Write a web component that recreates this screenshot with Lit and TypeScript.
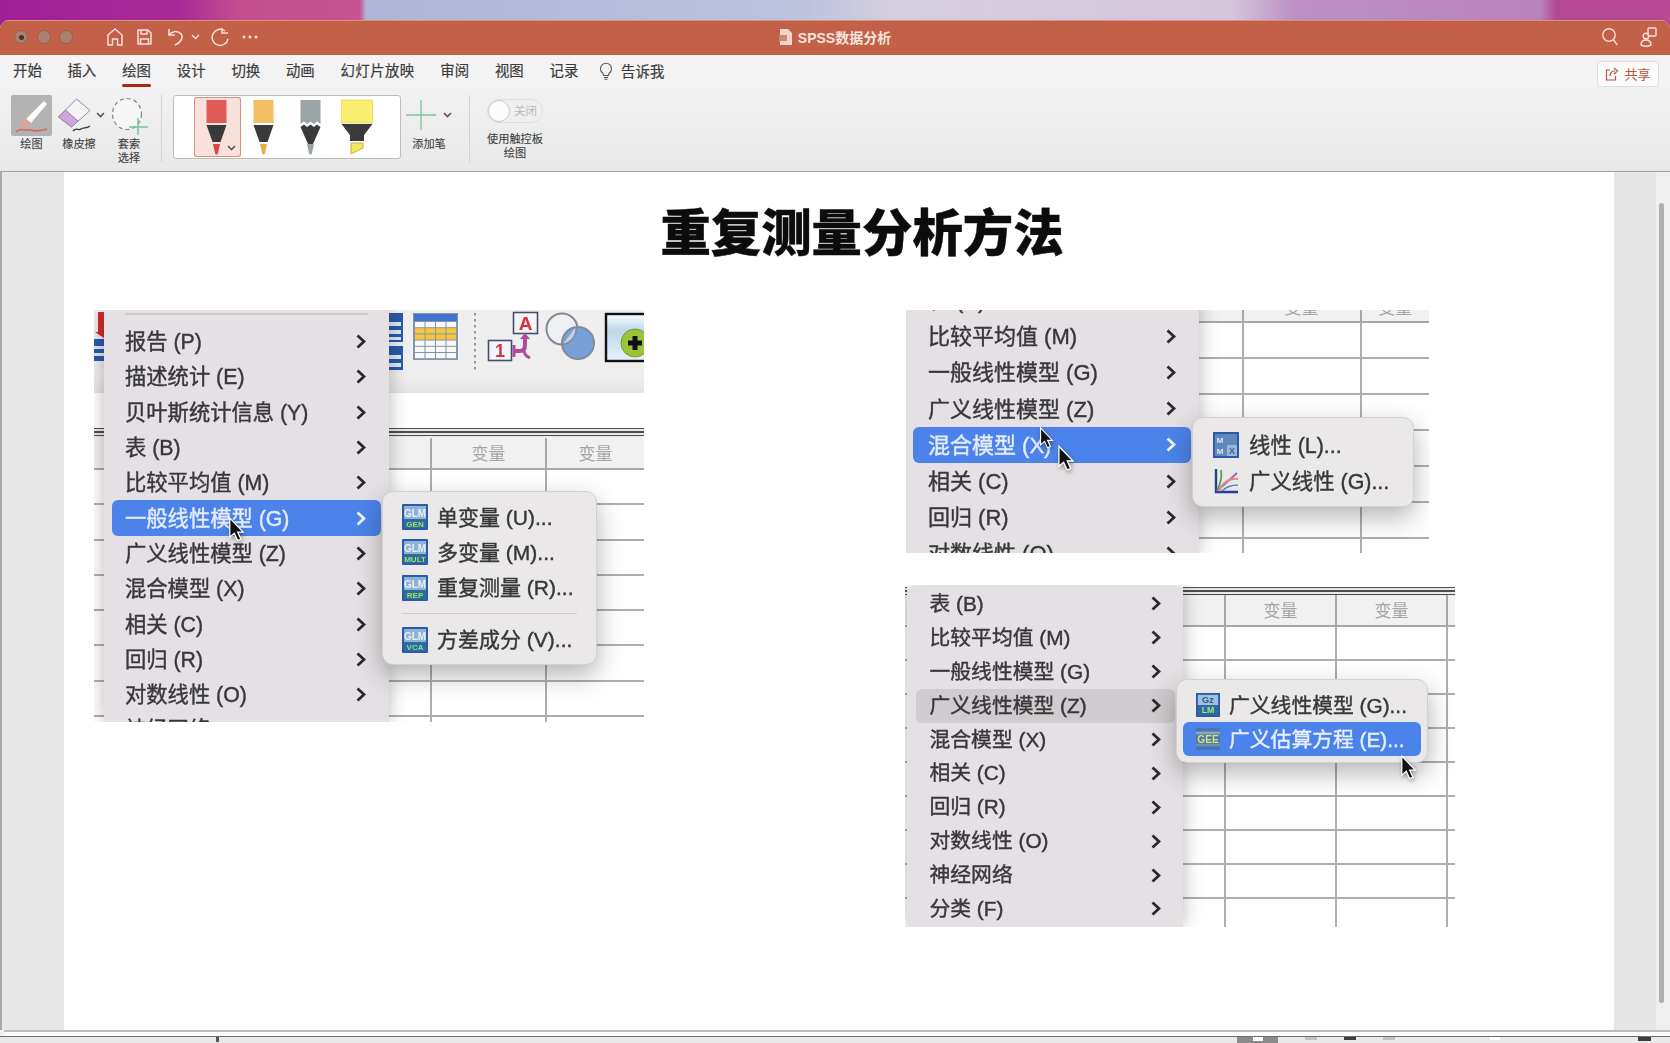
import { LitElement, css, html, svg } from 'lit';
import { customElement } from 'lit/decorators.js';

const chevron = html`<svg class="chev" width="10" height="15" viewBox="0 0 10 15"><path d="M1.5 1.5 8 7.5 1.5 13.5" fill="none" stroke="currentColor" stroke-width="2.8"/></svg>`;
const smallChev = html`<svg class="small-chev" width="9" height="6" viewBox="0 0 9 6"><path d="M1 1 4.5 4.5 8 1" fill="none" stroke="#555" stroke-width="1.6"/></svg>`;

function glm(sub: string, subColor = '#9be36a') {
  return html`<svg width="100%" viewBox="0 0 26 26" class="tile">
    <rect width="26" height="26" rx="1" fill="#2c5aa8"/>
    <rect x="2" y="2" width="22" height="13" fill="#8fb3d6"/>
    <rect x="2" y="15" width="22" height="9" fill="#2f6c9c"/>
    <text x="13" y="12.5" text-anchor="middle" font-size="10" font-weight="700" fill="#e6f0f8" font-family="Liberation Sans">GLM</text>
    <text x="13" y="22.5" text-anchor="middle" font-size="8" font-weight="700" fill="${subColor}" font-family="Liberation Sans">${sub}</text>
  </svg>`;
}

const mixIcon = html`<svg width="100%" viewBox="0 0 26 26" class="tile">
  <rect width="26" height="26" fill="#2c5aa8"/>
  <rect x="2" y="2" width="22" height="22" fill="#5f88bc"/>
  <rect x="14" y="13" width="10" height="11" fill="#9db8d4"/>
  <text x="7" y="11" text-anchor="middle" font-size="8" font-weight="700" fill="#dbe8f5" font-family="Liberation Sans">M</text>
  <text x="7" y="22" text-anchor="middle" font-size="8" font-weight="700" fill="#dbe8f5" font-family="Liberation Sans">M</text>
  <text x="19" y="22" text-anchor="middle" font-size="9" font-weight="700" fill="#3d5f94" font-family="Liberation Sans">X</text>
</svg>`;

const curveIcon = html`<svg width="100%" viewBox="0 0 26 26" class="tile">
  <path d="M3 1V24H25" fill="none" stroke="#26408e" stroke-width="2.4"/>
  <path d="M4 23C8 15 9 8 8 2" fill="none" stroke="#4fa35a" stroke-width="1.8"/>
  <path d="M4 23 24 5" fill="none" stroke="#8d6ab8" stroke-width="1.8"/>
  <path d="M6 23C10 14 16 10 25 11" fill="none" stroke="#e08a8a" stroke-width="2"/>
  <path d="M9 23C13 19 18 17 25 17" fill="none" stroke="#4d86c8" stroke-width="1.6"/>
</svg>`;

const gzlmIcon = html`<svg width="100%" viewBox="0 0 26 26" class="tile">
  <rect width="26" height="26" fill="#2c5aa8"/>
  <rect x="2" y="2" width="22" height="11" fill="#9cc0de"/>
  <rect x="2" y="13" width="22" height="11" fill="#2f6c9c"/>
  <text x="13" y="11" text-anchor="middle" font-size="10" font-weight="700" fill="#34588f" font-family="Liberation Sans">Gz</text>
  <text x="13" y="22" text-anchor="middle" font-size="9.5" font-weight="700" fill="#a6e07a" font-family="Liberation Sans">LM</text>
</svg>`;

const geeIcon = html`<svg width="100%" viewBox="0 0 26 26" class="tile">
  <rect y="1" width="26" height="24" fill="#4a75b4"/>
  <rect y="5" width="26" height="3" fill="#8fa6b8"/>
  <rect y="18" width="26" height="3" fill="#6f8fa8"/>
  <text x="13" y="17" text-anchor="middle" font-size="11" font-weight="700" fill="#d6e36c" font-family="Liberation Sans">GEE</text>
</svg>`;

// right part of the first screenshot's spss toolbar, starts at the menu edge
const spssTools = html`<svg class="spss-tools" width="255" height="60" viewBox="0 0 255 60">
  ${[0, 33].map((y) => svg`<g transform="translate(0 ${y + 3})">
    <rect width="14" height="29" fill="#2a5aa8"/>
    <rect y="9" width="12" height="4" fill="#dfe8f4"/><rect y="17" width="12" height="4" fill="#dfe8f4"/><rect y="24" width="12" height="3" fill="#dfe8f4"/>
  </g>`)}
  <g transform="translate(24 3)">
    <rect width="45" height="47" fill="#8494ad"/>
    <rect x="1" y="1" width="43" height="7" fill="#3f74c8"/>
    ${[0, 1, 2, 3, 4, 5].map((r) => [0, 1, 2, 3].map((c) => svg`<rect x=${2 + c * 10.5} y=${9 + r * 6.2} width="9.5" height="5.2" fill=${r === 1 || r === 2 ? '#f3c63c' : '#f8f8f8'}/>`))}
  </g>
  <path d="M86 3V60" stroke="#9a9a9a" stroke-width="2" stroke-dasharray="2.5 3.5"/>
  <rect x="124.5" y="2.5" width="24" height="21" fill="#f4f4f8" stroke="#42506a" stroke-width="1.6"/>
  <text x="136.5" y="20" text-anchor="middle" font-size="19" font-weight="700" fill="#d9323f" font-family="Liberation Sans">A</text>
  <rect x="99.5" y="30.5" width="23" height="20" fill="#f4f4f8" stroke="#42506a" stroke-width="1.6"/>
  <text x="111" y="47" text-anchor="middle" font-size="18" font-weight="700" fill="#d9323f" font-family="Liberation Sans">1</text>
  <path d="M125 41H131C135 41 136 38 136 35V29" fill="none" stroke="#b04a9c" stroke-width="4"/>
  <path d="M131 29 136 23 141 29Z" fill="#b04a9c"/>
  <path d="M125 35V47M135 41C136 45 137 46 141 48" fill="none" stroke="#b04a9c" stroke-width="3"/>
  <circle cx="173" cy="19" r="15.5" fill="#eef0f6" stroke="#85898f" stroke-width="2"/>
  <circle cx="189" cy="33" r="16" fill="#7aa0da" stroke="#7f8b9e" stroke-width="2"/>
  <path d="M173.5 34.5A15.5 15.5 0 0 0 187 17" fill="#c2d2ea" stroke="#85898f" stroke-width="1.5"/>
  <rect x="217" y="4" width="40" height="47" fill="url(#plus-bg)" stroke="#111" stroke-width="2.4"/>
  <defs><linearGradient id="plus-bg" x1="0" y1="0" x2="0" y2="1"><stop offset="0" stop-color="#fff"/><stop offset=".35" stop-color="#bcd8ea"/><stop offset="1" stop-color="#e8f2f8"/></linearGradient></defs>
  <circle cx="246" cy="33" r="14" fill="#9cc43a" stroke="#7c9a2c"/>
  <path d="M246 26V40M239 33H253" stroke="#111" stroke-width="5"/>
</svg>`;

const spssLeft = html`<svg class="spss-left" width="10" height="60" viewBox="0 0 10 60">
  <path d="M4 2H10V28L1 22H4Z" fill="#d8282c"/>
  <rect y="29" width="10" height="22" fill="#2a5aa8"/>
  <rect y="36" width="10" height="3" fill="#dfe8f4"/><rect y="43" width="10" height="3" fill="#dfe8f4"/>
</svg>`;

interface Sub { icon?: unknown; label?: string; on?: boolean; sep?: boolean }
interface Shot {
  left: number; top: number; width: number; height: number;
  toolbar: boolean; gapRow: number; triple: boolean; headH: number;
  first: number; col: number; cols: number; pitch: number; gridRows: number;
  menuLeft: number; menuW: number; menuTop: number; rowH: number; font: number;
  rowML: number; rowMR: number; rowPL: number; rowPR: number; ruleTop?: boolean;
  items: string[]; active: string; activeCls: string;
  subLeft: number; subTop: number; subW: number; subH: number; subPad: number; subRow: number; subFont: number;
  iconW: number; iconPad: number; iconGap: number; sub: Sub[];
  cursors: { x: number; y: number; s: number }[];
}

const SHOTS: Shot[] = [
  {
    left: 30, top: 138, width: 550, height: 412,
    toolbar: true, gapRow: 35, triple: true, headH: 33,
    first: 338, col: 115, cols: 1, pitch: 35.3, gridRows: 8,
    menuLeft: 10, menuW: 285, menuTop: 0, rowH: 35.3, font: 21.3,
    rowML: 7.5, rowMR: 8, rowPL: 13.5, rowPR: 15, ruleTop: true,
    items: ['报告 (P)', '描述统计 (E)', '贝叶斯统计信息 (Y)', '表 (B)', '比较平均值 (M)', '一般线性模型 (G)', '广义线性模型 (Z)', '混合模型 (X)', '相关 (C)', '回归 (R)', '对数线性 (O)', '神经网络'],
    active: '一般线性模型 (G)', activeCls: 'on',
    subLeft: 288, subTop: 181, subW: 215, subH: 174, subPad: 8.4, subRow: 35.3, subFont: 21,
    iconW: 26, iconPad: 13, iconGap: 9,
    sub: [
      { icon: glm('GEN'), label: '单变量 (U)...' },
      { icon: glm('MULT'), label: '多变量 (M)...' },
      { icon: glm('REP'), label: '重复测量 (R)...' },
      { sep: true },
      { icon: glm('VCA', '#7fe0a0'), label: '方差成分 (V)...' },
    ],
    cursors: [{ x: 134, y: 207, s: 17 }],
  },
  {
    left: 841.5, top: 138, width: 523.5, height: 243,
    toolbar: false, gapRow: 0, triple: false, headH: 13,
    first: 338, col: 118, cols: 1, pitch: 36, gridRows: 7,
    menuLeft: 0, menuW: 293, menuTop: -28, rowH: 36.2, font: 22,
    rowML: 7.5, rowMR: 7.5, rowPL: 15, rowPR: 15,
    items: ['表 (B)', '比较平均值 (M)', '一般线性模型 (G)', '广义线性模型 (Z)', '混合模型 (X)', '相关 (C)', '回归 (R)', '对数线性 (O)'],
    active: '混合模型 (X)', activeCls: 'on',
    subLeft: 286, subTop: 107, subW: 222.5, subH: 90, subPad: 10, subRow: 36, subFont: 21.4,
    iconW: 26, iconPad: 14.5, iconGap: 10,
    sub: [
      { icon: mixIcon, label: '线性 (L)...' },
      { icon: curveIcon, label: '广义线性 (G)...' },
    ],
    cursors: [{ x: 133.5, y: 117, s: 15 }, { x: 151.5, y: 135, s: 18 }],
  },
  {
    left: 841, top: 413, width: 550, height: 342,
    toolbar: false, gapRow: 0, triple: true, headH: 31,
    first: 321, col: 111, cols: 2, pitch: 34, gridRows: 9,
    menuLeft: 2, menuW: 276, menuTop: 2, rowH: 33.9, font: 20.8,
    rowML: 9, rowMR: 8, rowPL: 13.5, rowPR: 14,
    items: ['表 (B)', '比较平均值 (M)', '一般线性模型 (G)', '广义线性模型 (Z)', '混合模型 (X)', '相关 (C)', '回归 (R)', '对数线性 (O)', '神经网络', '分类 (F)'],
    active: '广义线性模型 (Z)', activeCls: 'hover',
    subLeft: 271, subTop: 94, subW: 252, subH: 84, subPad: 9, subRow: 34, subFont: 20.8,
    iconW: 24, iconPad: 13, iconGap: 9,
    sub: [
      { icon: gzlmIcon, label: '广义线性模型 (G)...' },
      { icon: geeIcon, label: '广义估算方程 (E)...', on: true },
    ],
    cursors: [{ x: 495, y: 170, s: 17 }],
  },
];

const TABS = ['开始', '插入', '绘图', '设计', '切换', '动画', '幻灯片放映', '审阅', '视图', '记录'];

function pen(body: string, tip: string, kind: 'round' | 'jag' | 'wide') {
  if (kind === 'wide') {
    return html`<svg width="47" height="60" viewBox="1 0 47 60">
      <rect x="7.5" y="3" width="31" height="23" fill="${body}" stroke="#e4c94a" stroke-width=".6"/>
      <path d="M7.5 27H38.5L30 38V44H16V38Z" fill="#3a3a3c"/>
      <path d="M17 46H29V51L17 57Z" fill="${tip}" stroke="#c9b23a" stroke-width="1"/>
    </svg>`;
  }
  const top = kind === 'jag'
    ? svg`<path d="M13.5 3H33.5V27L30 24.5 27 27 23.5 24.5 20 27 17 24.5 13.5 27Z" fill="${body}"/>
          <path d="M13.5 30 17 27.5 20 30 23.5 27.5 27 30 30 27.5 33.5 30 26 47H21Z" fill="#3a3a3c"/>`
    : svg`<rect x="13.5" y="3" width="20" height="23" fill="${body}"/>
          <path d="M13.5 28H33.5L27.5 45H19.5Z" fill="#3a3a3c"/>`;
  return html`<svg width="47" height="60" viewBox="1 0 47 60">
    ${top}
    <path d="M20 47H27L25 56C24.5 58 22.5 58 22 56Z" fill="${tip}"/>
  </svg>`;
}

@customElement('spss-shot')
export class SpssShot extends LitElement {
  static properties = { data: { attribute: false } };
  data!: Shot;

  static styles = css`
    :host { display: block; position: relative; width: 100%; height: 100%; overflow: hidden; filter: blur(0.35px); font-family: "Liberation Sans", "Noto Sans CJK SC", sans-serif; }
    .sheet { display: flex; flex-direction: column; width: 100%; height: 100%; background: #fff; }
    .bar { display: flex; flex: none; height: 83px; background: linear-gradient(#efefef 0, #eeeeee 82%, #e4e4e4 100%); }
    .spss-left { flex: none; }
    .spss-tools { flex: none; margin-left: 285px; }
    .gap { flex: none; background: #fff; }
    .triple { flex: none; height: 9px; background: repeating-linear-gradient(#4e4e4e 0 1.5px, #e8e8e8 1.5px 3.5px); }
    .head { flex: none; display: grid; background: #f1f1f1; border-bottom: 2px solid #a8a8a8; box-sizing: border-box; align-items: end; }
    .head span { text-align: center; font-size: 17px; line-height: 34px; color: #a5a5a5; border-right: 2px solid #a8a8a8; height: 30px; margin-top: -18px; }
    .head span.end { border-right: none; }
    .grid { flex: 1; display: grid; min-height: 0; overflow: hidden; }
    .grid i { display: block; border-right: 2px solid #aeaeae; border-bottom: 2px solid #aeaeae; box-sizing: border-box; }
    .grid i.end { border-right: none; }
    .menu { position: absolute; bottom: 0; background: #e4e0e4; box-shadow: 0 0 18px rgba(0, 0, 0, 0.28); overflow: hidden; }
    .rule { position: absolute; top: 3px; left: 21px; right: 21px; height: 2px; background: #cbc8cc; }
    .spacer { height: 14px; }
    .row { display: flex; align-items: center; justify-content: space-between; box-sizing: border-box; color: #38373a; -webkit-text-stroke: 0.4px #38373a; border-radius: 6px; white-space: nowrap; }
    .row > span { padding-bottom: 4px; }
    .row .chev { color: #2a2a2c; flex: none; }
    .row.on { background: #4c83ea; color: #e4ecfb; -webkit-text-stroke-color: #e4ecfb; }
    .row.on .chev { color: #eef3fc; }
    .row.hover { background: #cfcbce; }
    .sub { position: absolute; box-sizing: border-box; background: #eae8e8; border: 1px solid #d2d0d0; border-radius: 11px; box-shadow: 0 10px 26px rgba(0, 0, 0, 0.3); }
    .sub-row { display: flex; align-items: center; box-sizing: border-box; margin: 0 6px; border-radius: 6px; color: #38373a; -webkit-text-stroke: 0.4px #38373a; white-space: nowrap; }
    .sub-row > span:last-child { padding-bottom: 3px; }
    .sub-row.on { background: #4c83ea; color: #e8effc; -webkit-text-stroke-color: #e8effc; }
    .sub-row .tile { display: block; }
    .icon { flex: none; }
    .sep { height: 17px; display: flex; align-items: flex-end; padding: 0 19px 8px; box-sizing: border-box; }
    .sep::before { content: ""; flex: 1; height: 1.5px; background: #cdcbcb; }
    .cursor { position: absolute; filter: drop-shadow(1px 2px 2px rgba(0, 0, 0, 0.35)); }
  `;

  render() {
    const d = this.data;
    const cols = `${d.first}px repeat(${d.cols}, ${d.col}px) 1fr`;
    const perRow = d.cols + 2;
    const cells = Array.from({ length: d.gridRows * perRow });
    return html`
      <div class="sheet">
        ${d.toolbar ? html`<div class="bar">${spssLeft}${spssTools}</div>` : ''}
        ${d.gapRow ? html`<div class="gap" style="height:${d.gapRow}px"></div>` : ''}
        ${d.triple ? html`<div class="triple" style="margin-top:${d.toolbar ? 0 : 2}px"></div>` : ''}
        <div class="head" style="height:${d.headH}px;grid-template-columns:${cols}">
          <span></span>
          ${Array.from({ length: d.cols + 1 }).map((_, i) => html`<span class=${i === d.cols ? 'end' : ''}>${i === d.cols && d.cols === 2 ? '' : '变量'}</span>`)}
        </div>
        <div class="grid" style="grid-template-columns:${cols};grid-auto-rows:${d.pitch}px">
          ${cells.map((_, i) => html`<i class=${i % perRow === perRow - 1 ? 'end' : ''}></i>`)}
        </div>
      </div>
      <div class="menu" style="left:${d.menuLeft}px;width:${d.menuW}px;top:${d.menuTop}px">
        ${d.ruleTop ? html`<div class="rule"></div><div class="spacer"></div>` : ''}
        ${d.items.map((t) => html`<div class="row ${t === d.active ? d.activeCls : ''}"
            style="height:${d.rowH}px;font-size:${d.font}px;margin:0 ${d.rowMR}px 0 ${d.rowML}px;padding:0 ${d.rowPR}px 0 ${d.rowPL}px">
            <span>${t}</span>${chevron}</div>`)}
      </div>
      <div class="sub" style="left:${d.subLeft}px;top:${d.subTop}px;width:${d.subW}px;height:${d.subH}px;padding-top:${d.subPad - 1}px">
        ${d.sub.map((s) => s.sep
          ? html`<div class="sep"></div>`
          : html`<div class="sub-row ${s.on ? 'on' : ''}" style="height:${d.subRow}px;font-size:${d.subFont}px;padding-left:${d.iconPad}px;gap:${d.iconGap}px">
              <span class="icon" style="width:${d.iconW}px">${s.icon}</span><span>${s.label}</span></div>`)}
      </div>
      ${d.cursors.map((c) => html`<svg class="cursor" style="left:${c.x}px;top:${c.y}px" width=${c.s} height=${c.s * 1.45} viewBox="0 0 15 22">
        <path d="M1.5 1V18L5.5 14.5 8.5 21 11.5 19.8 8.5 13.5H13.5Z" fill="#111" stroke="#fff" stroke-width="1.1"/></svg>`)}
    `;
  }
}

@customElement('app-root')
export class AppRoot extends LitElement {
  static styles = css`
    :host { display: block; width: 1670px; height: 1043px; overflow: hidden; }
    .desktop { display: flex; flex-direction: column; height: 100%; box-sizing: border-box; padding-top: 20px;
      background: linear-gradient(90deg, #a01f97 0, #a82a96 180px, #c2508f 240px, #c45590 360px, #aeb5d6 366px, #bcc2dc 800px, #d5cfdf 892px, #d6c6dc 1230px, #bc90c2 1294px, #b884bc 1540px, #b54a92 1556px);
      font-family: "Liberation Sans", "Noto Sans CJK SC", sans-serif; }
    .win { flex: 1; display: flex; flex-direction: column; min-height: 0; background: #f2f2f2; border-radius: 9px 9px 0 0; overflow: hidden; }

    .titlebar { flex: none; height: 35px; padding-bottom: 2px; background: #c26048; display: grid; grid-template-columns: 1fr auto 1fr; align-items: center; color: #f3dcd3; border-top: 1px solid #d8917d; box-sizing: border-box; }
    .tb-left { display: flex; align-items: center; padding-left: 14px; }
    .light { width: 14px; height: 14px; border-radius: 50%; background: #ab7f70; border: 1px solid #95604f; box-sizing: border-box; margin-right: 8.5px; display: flex; align-items: center; justify-content: center; }
    .light.dot::after { content: ""; width: 5px; height: 5px; border-radius: 50%; background: #4a3028; }
    .qa { display: flex; align-items: center; margin-left: 24px; gap: 11px; }
    .qa svg { display: block; }
    .qa .undo { margin-left: 3px; }
    .qa .down { margin-left: -5px; }
    .qa .more { margin-left: 0; }
    .doc { display: flex; align-items: center; gap: 6px; font-size: 14px; font-weight: 700; color: #f5e4dd; }
    .tb-right { display: flex; justify-content: flex-end; align-items: center; gap: 20px; padding-right: 13px; }

    .tabs { flex: none; height: 32px; display: flex; align-items: center; justify-content: space-between; background: #f3f3f3; padding: 0 11px 0 13px; box-sizing: border-box; }
    .tab-list { display: flex; align-items: center; height: 100%; gap: 25.8px; }
    .tab { position: relative; font-size: 14.4px; color: #3c3c3c; line-height: 33px; height: 100%; white-space: nowrap; -webkit-text-stroke: 0.2px #3c3c3c; }
    .tab.wide { letter-spacing: 0.4px; }
    .tab.on::after { content: ""; position: absolute; left: 0; right: 0; bottom: 0; height: 3px; border-radius: 2px; background: #a3271a; }
    .tell { display: flex; align-items: center; gap: 8px; font-size: 14.4px; color: #3c3c3c; margin-left: -5px; padding-bottom: 1px; -webkit-text-stroke: 0.2px #3c3c3c; }
    .share { display: flex; align-items: center; gap: 5px; width: 62px; height: 26px; margin-top: 5px; justify-content: center; background: #fbfbfb; border: 1px solid #dddddd; border-radius: 3px; box-sizing: border-box; color: #b5543f; font-size: 13px; }

    .ribbon { flex: none; height: 85px; display: flex; align-items: flex-start; padding: 8px 0 0 11px; box-sizing: border-box; background: linear-gradient(#f1f1f1, #e9e9e9); border-bottom: 1px solid #9e9e9e; }
    .tool { display: flex; flex-direction: column; align-items: center; flex: none; font-size: 11.2px; line-height: 14px; color: #3e3e3e; text-align: center; -webkit-text-stroke: 0.1px #3e3e3e; }
    .tool .ic { height: 40px; margin-bottom: 2px; display: flex; align-items: flex-start; }
    .tool .ic.row-ic { align-items: center; }
    .eraser { gap: 3px; margin-left: 3px; }
    .addpen { gap: 7px; }
    .lasso { margin-left: 3px; }
    .btn-on { width: 41px; height: 41px; background: #b3b3b3; border-radius: 2px; }
    .vr { flex: none; width: 1px; height: 67px; background: #d3d3d3; }
    .gallery { flex: none; width: 228px; height: 64px; margin-left: 11px; display: grid; grid-template-columns: repeat(4, 47px); padding: 1px 0 0 20px; box-sizing: border-box; background: #fff; border: 1px solid #bdbdbd; border-radius: 3px; }
    .pen { position: relative; height: 60px; box-sizing: border-box; }
    .pen svg { display: block; }
    .pen.sel { background: #f8e1db; box-shadow: inset 0 0 0 1px #da8e7c; border-radius: 3px; }
    .pen .small-chev { position: absolute; right: 5px; bottom: 6px; }
    .toggle { display: flex; align-items: center; width: 56px; height: 24px; border-radius: 12px; background: #efefef; border: 1px solid #dcdcdc; box-sizing: border-box; margin: 4px 0 9px; color: #b9b9b9; font-size: 11.5px; gap: 4px; -webkit-text-stroke: 0; }
    .knob { flex: none; width: 22px; height: 22px; border-radius: 50%; background: #fbfbfb; border: 1px solid #c9c9c9; box-sizing: border-box; }

    .main { flex: none; height: 858px; display: flex; }
    .side { flex: none; width: 64px; background: #e7e7e7; border-left: 2px solid #a8a8a8; box-sizing: border-box; }
    .slide { flex: 1; position: relative; background: #fff; }
    .title { margin: 0; padding: 28px 0 0 46px; text-align: center; font-size: 50.4px; line-height: 60px; font-weight: 900; color: #0c0c0c; -webkit-text-stroke: 0.4px #0c0c0c; font-family: "Noto Sans CJK SC", sans-serif; }
    .shot { position: absolute; }
    .rail { flex: none; width: 56px; background: #e5e5e5; display: flex; justify-content: flex-end; }
    .track { width: 14px; background: #efefef; padding: 31px 6px 0 3px; box-sizing: border-box; }
    .thumb { height: 800px; background: #afafaf; border-radius: 3px; }

    .foot { flex: none; height: 6px; background: #fcfcfc; border-top: 2px solid #bcbcbc; box-sizing: border-box; margin-left: 4px; }
    .status { flex: 1; display: flex; align-items: flex-start; background: #e9e9e9; border-top: 1.5px solid #6e6e6e; padding-left: 216px; overflow: hidden; }
    .tick { flex: none; width: 3px; height: 5px; background: #555; }
    .view { flex: none; width: 41px; height: 6px; background: #8a8a8a; margin-left: 1018px; display: flex; justify-content: center; }
    .view i { width: 10px; height: 4px; background: #fff; }
    .mini { flex: none; width: 12px; height: 3px; margin-left: 27px; background: #c2c2c2; }
    .mini.dark { background: #3e3e3e; }
    .knob-s { flex: none; width: 10px; height: 3px; margin-left: 95px; background: #fff; }
    .end { flex: none; width: 13px; height: 4px; margin-left: 138px; background: #3e3e3e; }
  `;

  render() {
    return html`
      <div class="desktop">
        <div class="win">
          <header class="titlebar">
            <div class="tb-left">
              <span class="light dot"></span><span class="light"></span><span class="light"></span>
              <div class="qa">
                <svg width="18" height="20" viewBox="0 0 18 20" fill="none" stroke="#f6dfd6" stroke-width="1.5"><path d="M2 18V8L9 2l7 6v10h-4.5v-6h-5v6Z" stroke-linejoin="round"/></svg>
                <svg width="18" height="18" viewBox="0 0 18 18" fill="none" stroke="#f6dfd6" stroke-width="1.5"><path d="M3 2h10l3 3v11H3Z" stroke-linejoin="round"/><path d="M6 2v4h6V2M5.5 16v-5h8v5"/></svg>
                <svg class="undo" width="18" height="20" viewBox="0 0 18 20" fill="none" stroke="#f6dfd6" stroke-width="1.6"><path d="M2 2v6h6"/><path d="M2 8c3-4 9-5 12-1 3 4-1 9-6 11"/></svg>
                <svg class="down" width="9" height="6" viewBox="0 0 9 6"><path d="M1 1 4.5 4.5 8 1" fill="none" stroke="#f6dfd6" stroke-width="1.5"/></svg>
                <svg width="20" height="20" viewBox="0 0 20 20" fill="none" stroke="#f6dfd6" stroke-width="1.5"><path d="M14 4A8 8 0 1 0 17 12"/><path d="M11 1v5h6" /></svg>
                <svg class="more" width="16" height="4" viewBox="0 0 16 4" fill="#f6dfd6"><circle cx="2" cy="2" r="1.5"/><circle cx="8" cy="2" r="1.5"/><circle cx="14" cy="2" r="1.5"/></svg>
              </div>
            </div>
            <div class="doc">
              <svg width="13" height="16" viewBox="0 0 13 16"><path d="M1 0h8l4 4v12H1Z" fill="#eed4ca"/><rect x="0" y="6" width="8" height="6" fill="#c88a78"/></svg>
              <span>SPSS数据分析</span>
            </div>
            <div class="tb-right">
              <svg width="18" height="20" viewBox="0 0 18 20" fill="none" stroke="#f6dfd6" stroke-width="1.4"><circle cx="8" cy="8" r="6.2"/><path d="m12.5 13 4 5"/></svg>
              <svg width="18" height="20" viewBox="0 0 18 20" fill="none" stroke="#f6dfd6" stroke-width="1.4"><rect x="9" y="1" width="8" height="8" rx="1"/><circle cx="7" cy="9" r="2.8"/><path d="M2 18c0-4 2-5 5-5s5 1 5 5c-3 1.5-7 1.5-10 0Z"/></svg>
            </div>
          </header>

          <nav class="tabs">
            <div class="tab-list">
              ${TABS.map((t) => html`<span class="tab ${t === '绘图' ? 'on' : ''} ${t.length > 2 ? 'wide' : ''}">${t}</span>`)}
              <span class="tell">
                <svg width="14" height="18" viewBox="0 0 14 18" fill="none" stroke="#555" stroke-width="1.1"><path d="M4 11.5C2 10 1.5 8 1.5 6.8a5.5 5.5 0 0 1 11 0c0 1.2-.5 3.2-2.5 4.7l-.5 2h-5Z"/><path d="M5 15.5h4M5.5 17.2h3"/></svg>
                告诉我
              </span>
            </div>
            <div class="share">
              <svg width="14" height="14" viewBox="0 0 14 14" fill="none" stroke="#b5543f" stroke-width="1.2"><path d="M5 3H1.5v10h9V9"/><path d="M5 9c0-3 2-5 4-5h1M9 1l3.5 3L9 7"/></svg>
              共享
            </div>
          </nav>

          <section class="ribbon">
            <div class="tool" style="width:41px">
              <div class="ic"><div class="btn-on">
                <svg width="41" height="41" viewBox="0 0 41 41">
                  <path d="M33 6 36 9 20 28 15 24Z" fill="#fbfbfb" stroke="#d8d8d8" stroke-width=".6"/>
                  <path d="M15 24 20 28 15.5 31 8 33.5Z" fill="#ef9a92"/>
                  <path d="M5 37C9 32 12 36 16 35 20 34 24 38 36 34" fill="none" stroke="#e0605a" stroke-width="1.5"/>
                </svg>
              </div></div>
              <span>绘图</span>
            </div>
            <div class="tool" style="width:48px;margin-left:3px">
              <div class="ic row-ic eraser">
                <svg width="36" height="36" viewBox="0 0 36 36">
                  <path d="M1.5 20 19.5 2 33 13.5 14.5 30Z" fill="#f4f4f6" stroke="#9a86a6" stroke-width="1"/>
                  <path d="M1.5 20 8.5 13 21 24 14.5 30Z" fill="#cfa5dc" stroke="#9a86a6" stroke-width="1"/>
                  <path d="M16 34c4-4 5 0 8-2 3-2 5 0 9-3" fill="none" stroke="#333" stroke-width="1.3"/>
                </svg>
                ${smallChev}
              </div>
              <span>橡皮擦</span>
            </div>
            <div class="tool" style="width:40px;margin-left:6px">
              <div class="ic lasso">
                <svg width="42" height="40" viewBox="0 0 42 40">
                  <ellipse cx="17" cy="19" rx="14.5" ry="15.5" fill="#f6f6f6" stroke="#858585" stroke-width="1.2" stroke-dasharray="4 3"/>
                  <path d="M28 23V41M19 32H38" stroke="#75c294" stroke-width="1.5"/>
                </svg>
              </div>
              <span>套索<br />选择</span>
            </div>
            <div class="vr" style="margin-left:12px"></div>
            <div class="gallery">
              <div class="pen sel">${pen('#e05a58', '#d9434a', 'round')}${smallChev}</div>
              <div class="pen">${pen('#f2c062', '#e0b040', 'round')}</div>
              <div class="pen">${pen('#9aa3a6', '#9aa3a6', 'jag')}</div>
              <div class="pen">${pen('#fbef6f', '#f5e860', 'wide')}</div>
            </div>
            <div class="tool" style="width:50px;margin-left:3px">
              <div class="ic row-ic addpen">
                <svg width="30" height="30" viewBox="0 0 30 30"><path d="M15 0V30M0 15H30" stroke="#7cc49a" stroke-width="1.3"/></svg>
                ${smallChev}
              </div>
              <span>添加笔</span>
            </div>
            <div class="vr" style="margin-left:15px"></div>
            <div class="tool" style="width:70px;margin-left:10px">
              <div class="toggle"><span class="knob"></span><span>关闭</span></div>
              <span>使用触控板<br />绘图</span>
            </div>
          </section>

          <main class="main">
            <div class="side"></div>
            <div class="slide">
              <h1 class="title">重复测量分析方法</h1>
              ${SHOTS.map((s) => html`<div class="shot" style="left:${s.left}px;top:${s.top}px;width:${s.width}px;height:${s.height}px"><spss-shot .data=${s}></spss-shot></div>`)}
            </div>
            <div class="rail"><div class="track"><div class="thumb"></div></div></div>
          </main>

          <div class="foot"></div>
          <footer class="status">
            <span class="tick"></span>
            <span class="view"><i></i></span>
            <span class="mini"></span>
            <span class="mini dark"></span>
            <span class="mini"></span>
            <span class="knob-s"></span>
            <span class="end"></span>
          </footer>
        </div>
      </div>
    `;
  }
}
